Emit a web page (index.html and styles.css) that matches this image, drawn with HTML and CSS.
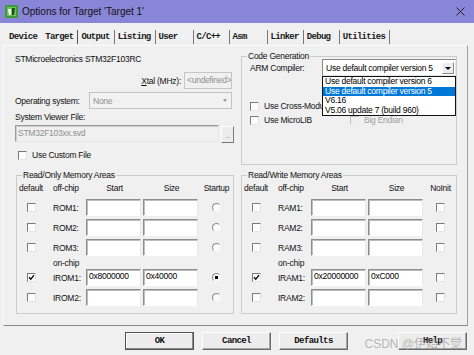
FILE: index.html
```html
<!DOCTYPE html>
<html lang="en">
<head>
    <meta charset="UTF-8">
    <title>Options for Target 'Target 1'</title>
    <link rel="stylesheet" href="styles.css">
</head>
<body>
    <div class="titlebar">
        <svg class="app-icon" viewBox="0 0 13 13">
            <rect x="0" y="0" width="13" height="13" rx="1" fill="#3f9a3c"/>
            <rect x="2" y="2" width="9" height="9" fill="#6cc35e"/>
            <path d="M3 4 L6 4 L6 10 L4 10 Z" fill="#fff"/>
            <path d="M7 3 L10 3 L9 10 L7 10 Z" fill="#1f4f1c"/>
        </svg>
        <span class="title">Options for Target 'Target 1'</span>
        <svg class="close" viewBox="0 0 9 9">
            <path d="M0.5 0.5 L8.5 8.5 M8.5 0.5 L0.5 8.5" stroke="#222" stroke-width="1"/>
        </svg>
    </div>

    <div class="tabs">
        <span class="tab tab-hidden-sep">Device</span>
        <span class="tab active">Target</span>
        <span class="tab">Output</span>
        <span class="tab">Listing</span>
        <span class="tab tab-wide">User</span>
        <span class="tab">C/C++</span>
        <span class="tab tab-wide">Asm</span>
        <span class="tab">Linker</span>
        <span class="tab">Debug</span>
        <span class="tab">Utilities</span>
    </div>

    <div class="panel">
        <div class="target-info">
            <div class="device">STMicroelectronics STM32F103RC</div>
            <div class="row xtal">
                <label><u>X</u>tal (MHz):</label>
                <span class="field disabled xtal-input">&lt;undefined&gt;</span>
            </div>
            <div class="row os">
                <label class="os-label">Operating system:</label>
                <span class="combo disabled">None<span class="combo-arrow"></span></span>
            </div>
            <div class="svf-label">System Viewer File:</div>
            <div class="row svf">
                <span class="field sunken disabled svf-input">STM32F103xx.svd</span>
                <span class="dots-btn">...</span>
            </div>
            <div class="row check custom-file">
                <span class="cb"></span>
                <span>Use Custom File</span>
            </div>
        </div>

        <fieldset class="group codegen">
            <legend>Code Generation</legend>
            <div class="row compiler">
                <label class="compiler-label">ARM Compiler:</label>
                <div class="combo-wrap">
                    <span class="combo arm-combo">Use default compiler version 5<span class="drop-btn"></span></span>
                    <ul class="droplist">
                        <li>Use default compiler version 6</li>
                        <li class="selected">Use default compiler version 5</li>
                        <li>V6.16</li>
                        <li>V5.06 update 7 (build 960)</li>
                    </ul>
                </div>
            </div>
            <div class="row check cross-module">
                <span class="cb"></span>
                <span>Use Cross-Module Optimization</span>
            </div>
            <div class="row check">
                <span class="check-item">
                    <span class="cb"></span>
                    <span>Use MicroLIB</span>
                </span>
                <span class="check-item">
                    <span class="cb off"></span>
                    <span class="muted">Big Endian</span>
                </span>
            </div>
        </fieldset>

        <fieldset class="group mem mem-ro">
            <legend>Read/Only Memory Areas</legend>
            <div class="mem-grid">
                <span class="head">default</span>
                <span class="head name">off-chip</span>
                <span class="head">Start</span>
                <span class="head">Size</span>
                <span class="head">Startup</span>

                <span class="cb"></span>
                <span class="name">ROM1:</span>
                <span class="mem-input"></span>
                <span class="mem-input"></span>
                <span class="radio"></span>

                <span class="cb"></span>
                <span class="name">ROM2:</span>
                <span class="mem-input"></span>
                <span class="mem-input"></span>
                <span class="radio"></span>

                <span class="cb"></span>
                <span class="name">ROM3:</span>
                <span class="mem-input"></span>
                <span class="mem-input"></span>
                <span class="radio"></span>

                <span class="name onchip">on-chip</span>

                <span class="cb"><svg viewBox="0 0 7 7"><path d="M1 3.2 L2.8 5.2 L6 1.2" fill="none" stroke="#000" stroke-width="1.3"/></svg></span>
                <span class="name">IROM1:</span>
                <span class="mem-input">0x8000000</span>
                <span class="mem-input">0x40000</span>
                <span class="radio on"></span>

                <span class="cb"></span>
                <span class="name">IROM2:</span>
                <span class="mem-input"></span>
                <span class="mem-input"></span>
                <span class="radio"></span>
            </div>
        </fieldset>

        <fieldset class="group mem">
            <legend>Read/Write Memory Areas</legend>
            <div class="mem-grid">
                <span class="head">default</span>
                <span class="head name">off-chip</span>
                <span class="head">Start</span>
                <span class="head">Size</span>
                <span class="head">NoInit</span>

                <span class="cb"></span>
                <span class="name">RAM1:</span>
                <span class="mem-input"></span>
                <span class="mem-input"></span>
                <span class="cb"></span>

                <span class="cb"></span>
                <span class="name">RAM2:</span>
                <span class="mem-input"></span>
                <span class="mem-input"></span>
                <span class="cb"></span>

                <span class="cb"></span>
                <span class="name">RAM3:</span>
                <span class="mem-input"></span>
                <span class="mem-input"></span>
                <span class="cb"></span>

                <span class="name onchip">on-chip</span>

                <span class="cb"><svg viewBox="0 0 7 7"><path d="M1 3.2 L2.8 5.2 L6 1.2" fill="none" stroke="#000" stroke-width="1.3"/></svg></span>
                <span class="name">IRAM1:</span>
                <span class="mem-input">0x20000000</span>
                <span class="mem-input">0xC000</span>
                <span class="cb"></span>

                <span class="cb"></span>
                <span class="name">IRAM2:</span>
                <span class="mem-input"></span>
                <span class="mem-input"></span>
                <span class="cb"></span>
            </div>
        </fieldset>
    </div>

    <div class="buttons">
        <span class="btn default">OK</span>
        <span class="btn">Cancel</span>
        <span class="btn">Defaults</span>
        <span class="btn help">Help</span>
    </div>

    <div class="watermark">CSDN @伊始不觉</div>
</body>
</html>
```

FILE: styles.css
```css
* {
    box-sizing: border-box;
}
body {
    margin: 0;
    width: 474px;
    height: 355px;
    overflow: hidden;
    position: relative;
    background: #f0f0f0;
    font-family: "Liberation Sans", Arial, sans-serif;
    font-size: 8.5px;
    letter-spacing: -0.25px;
    color: #111;
}

/* title bar */
.titlebar {
    height: 23px;
    display: flex;
    align-items: center;
    padding: 0 9px 0 5px;
    background: #8a86d7;
}
.app-icon {
    width: 13px;
    height: 13px;
    display: block;
}
.title {
    margin-left: 4px;
    font-size: 10px;
    letter-spacing: 0;
    color: #111;
}
.close {
    margin-left: auto;
    width: 9px;
    height: 9px;
}

/* tabs */
.tabs {
    height: 22px;
    display: flex;
    align-items: flex-end;
    padding-left: 6px;
    font-family: "Liberation Mono", monospace;
    font-size: 9px;
    font-weight: bold;
    letter-spacing: -0.7px;
    color: #1a1a1a;
}
.tab {
    min-width: 36px;
    height: 14px;
    margin-bottom: 1px;
    line-height: 14px;
    padding: 0 4px 0 3px;
    border-right: 1px solid #777;
}
.tab-wide {
    min-width: 38px;
}
.tab-hidden-sep {
    border-right-color: transparent;
}
.tab.active {
    border-right-color: #555;
}

/* main panel */
.panel {
    height: 281px;
    margin: 0 6px 0 3px;
    padding: 5px 0 0 11px;
    border: 1px solid #fafafa;
    border-right-color: #a0a0a0;
    border-bottom-color: #8c8c8c;
    display: grid;
    grid-template-columns: 219px 216px;
    grid-template-rows: 114px 144px;
    column-gap: 7px;
    row-gap: 5px;
}
.row {
    display: flex;
    align-items: center;
}
.target-info {
    padding-top: 2px;
}
.device {
    line-height: 12px;
}
.xtal {
    margin-top: 7px;
    height: 17px;
    justify-content: flex-end;
    gap: 3px;
    padding-right: 2px;
}
.field {
    height: 17px;
    line-height: 15px;
    padding: 0 2px;
    border: 1px solid #c6c6c6;
    background: #f0f0f0;
    white-space: nowrap;
    overflow: hidden;
}
.disabled {
    color: #8f8f8f;
}
.xtal-input {
    width: 48px;
}
.os {
    margin-top: 3px;
    height: 17px;
}
.os-label {
    width: 74px;
}
.combo {
    position: relative;
    display: flex;
    align-items: center;
    width: 143px;
    height: 17px;
    padding-left: 3px;
    border: 1px solid #c3c3c3;
    background: #f2f2f2;
}
.combo-arrow {
    position: absolute;
    right: 1px;
    top: 1px;
    width: 9px;
    height: 13px;
}
.combo-arrow::after {
    content: "";
    position: absolute;
    left: 2px;
    top: 5px;
    border-left: 2.5px solid transparent;
    border-right: 2.5px solid transparent;
    border-top: 3px solid #9a9a9a;
}
.svf-label {
    margin-top: 2px;
    line-height: 12px;
}
.svf {
    margin-top: 2px;
    height: 18px;
    gap: 2px;
    align-items: stretch;
}
.sunken {
    border-color: #9c9c9c #e8e8e8 #e8e8e8 #9c9c9c;
    box-shadow: inset 1px 1px #cdcdcd;
}
.svf-input {
    width: 204px;
}
.dots-btn {
    width: 13px;
    margin-top: 1px;
    border: 1px solid;
    border-color: #fff #7a7a7a #7a7a7a #fff;
    background: #ececec;
    color: #888;
    text-align: center;
    line-height: 18px;
    font-size: 7px;
}
.check {
    height: 14px;
    gap: 5px;
}
.custom-file {
    margin-top: 5px;
    padding-left: 3px;
}

/* check boxes and radios */
.cb {
    display: flex;
    width: 9px;
    height: 9px;
    flex: none;
    border: 1px solid;
    border-color: #7b7b7b #e4e4e4 #e4e4e4 #7b7b7b;
    background: #fdfdfd;
}
.cb svg {
    width: 7px;
    height: 7px;
}
.cb.off {
    border-color: #c2c2c2 #ececec #ececec #c2c2c2;
    background: #f0f0f0;
}
.radio {
    width: 9px;
    height: 9px;
    border-radius: 50%;
    border: 1px solid;
    border-color: #8a8a8a #f4f4f4 #f4f4f4 #8a8a8a;
    background: #fafafa;
}
.radio.on {
    background: radial-gradient(circle, #000 0 1.5px, #fafafa 2px);
}

/* group boxes */
.group {
    margin: 0;
    padding: 0;
    min-width: 0;
    border: 1px solid #cbcbcb;
}
.group legend {
    margin-left: 5px;
    padding: 0 1px;
    line-height: 10px;
}
.codegen {
    height: 114px;
}
.compiler {
    margin-top: -2px;
    height: 17px;
    padding-left: 8px;
}
.compiler-label {
    width: 72px;
}
.combo-wrap {
    position: relative;
}
.arm-combo {
    width: 134px;
    background: #fff;
    border-color: #8a8a8a #e6e6e6 #e6e6e6 #8a8a8a;
    color: #000;
}
.drop-btn {
    position: absolute;
    right: 1px;
    top: 2px;
    width: 12px;
    height: 12px;
    border: 1px solid;
    border-color: #fff #8a8a8a #8a8a8a #fff;
    background: #ededed;
}
.drop-btn::after {
    content: "";
    position: absolute;
    left: 2px;
    top: 4px;
    border-left: 3px solid transparent;
    border-right: 3px solid transparent;
    border-top: 3px solid #000;
}
.droplist {
    position: absolute;
    left: 0;
    top: 17px;
    width: 134px;
    margin: 0;
    padding: 0;
    list-style: none;
    border: 1px solid #111;
    background: #fff;
    color: #000;
    z-index: 2;
}
.droplist li {
    height: 9.5px;
    line-height: 9.5px;
    padding-left: 2px;
    white-space: nowrap;
}
.droplist .selected {
    background: #0078d7;
    color: #fff;
}
.cross-module {
    margin-top: 23px;
    padding-left: 8px;
}
.cross-module + .row {
    padding-left: 8px;
}
.check-item {
    display: flex;
    align-items: center;
    gap: 5px;
    width: 95px;
}
.muted {
    color: #a0a0a0;
}

/* memory areas */
.mem {
    height: 144px;
}
.mem-ro {
    margin-left: 1px;
}
.mem-grid {
    display: grid;
    grid-template-columns: 28px 41px 57px 57px 1fr;
    grid-template-rows: 16px 17px 17px 17px 7px 17px 17px;
    row-gap: 3px;
    align-items: center;
    justify-items: center;
}
.mem-grid .name {
    justify-self: start;
    padding-left: 8px;
    white-space: nowrap;
}
.onchip {
    grid-column: 2 / 6;
    line-height: 10px;
}
.mem-input {
    justify-self: start;
    width: 55px;
    height: 17px;
    padding: 1px 0 0 2px;
    line-height: 11px;
    border: 1px solid;
    border-color: #8d8d8d #e8e8e8 #fff #8d8d8d;
    box-shadow: inset 1px 1px #bdbdbd;
    background: #fff;
    color: #000;
}

/* dialog buttons */
.buttons {
    display: flex;
    gap: 8px;
    margin-top: 6px;
    padding: 0 7px 0 125px;
    font-family: "Liberation Mono", monospace;
    font-size: 9px;
    font-weight: bold;
    letter-spacing: -0.6px;
}
.btn {
    width: 69px;
    height: 18px;
    line-height: 16px;
    text-align: center;
    border: 1px solid;
    border-color: #fdfdfd #6b6b6b #6b6b6b #fdfdfd;
    box-shadow: inset -1px -1px #a5a5a5;
    background: #ececec;
}
.btn.default {
    border-color: #505050;
    box-shadow: inset -1px -1px #8a8a8a, inset 1px 1px #fff;
}
.help {
    margin-left: auto;
}

.watermark {
    position: absolute;
    right: 12px;
    bottom: 4px;
    font-family: "Liberation Sans", "Noto Sans CJK SC", sans-serif;
    font-size: 12px;
    letter-spacing: 0;
    color: rgba(140, 140, 140, 0.6);
}
```
